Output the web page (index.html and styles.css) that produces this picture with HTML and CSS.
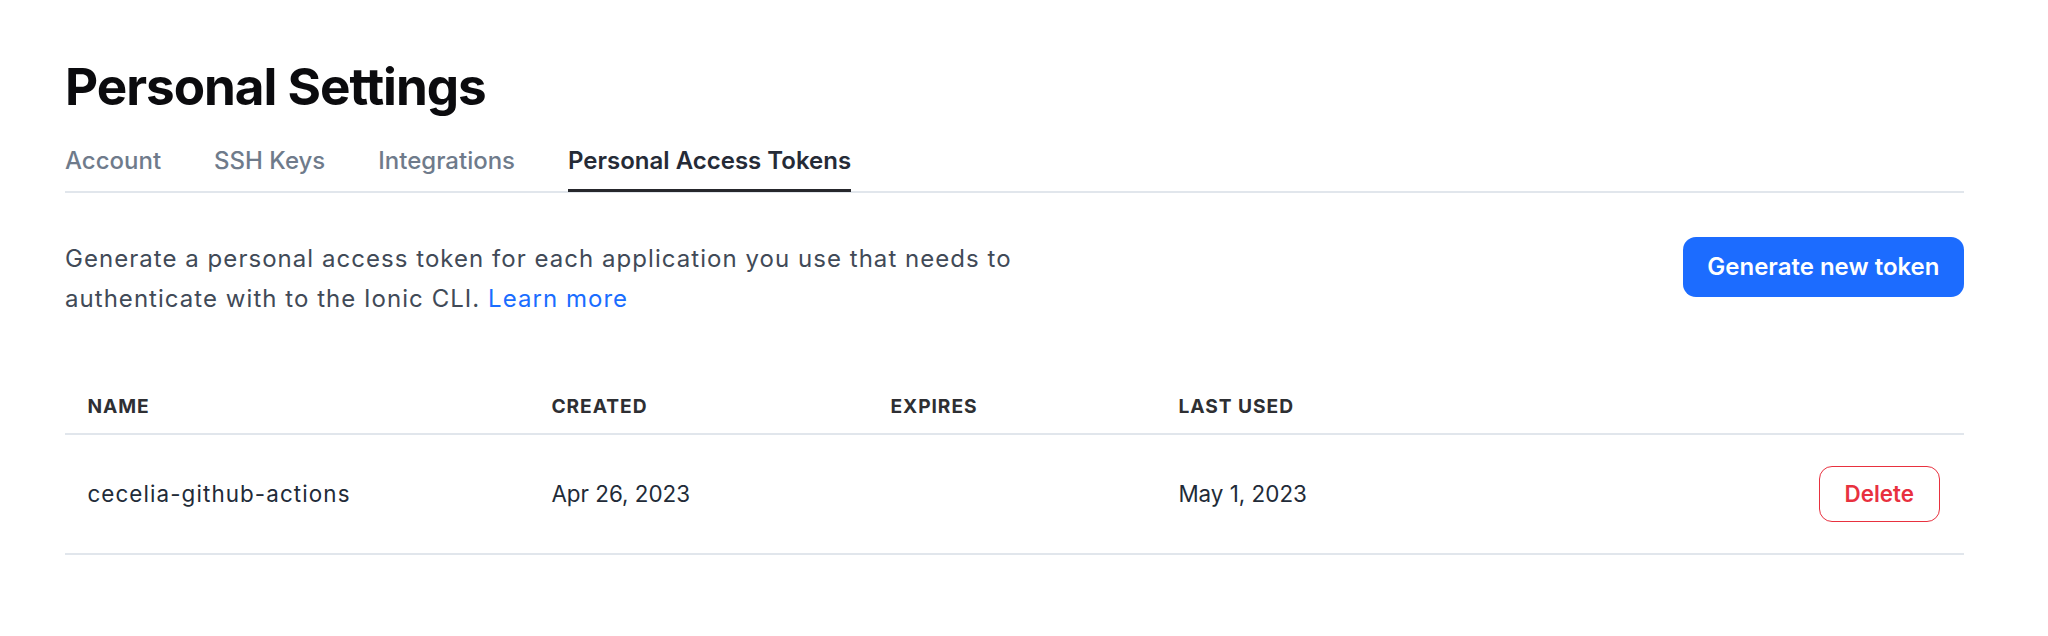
FILE: index.html
```html
<!DOCTYPE html>
<html lang="en">
<head>
<meta charset="utf-8">
<title>Personal Settings</title>
<link rel="stylesheet" href="styles.css">
</head>
<body>
<main class="page">
  <h1 class="title">Personal Settings</h1>
  <nav class="tabs">
    <a class="tab">Account</a>
    <a class="tab">SSH Keys</a>
    <a class="tab">Integrations</a>
    <a class="tab tab-active">Personal Access Tokens</a>
  </nav>
  <section class="intro">
    <p class="intro-text">Generate a personal access token for each application you use that needs to authenticate with to the Ionic CLI. <a class="link">Learn more</a></p>
    <button class="btn-primary">Generate new token</button>
  </section>
  <div class="table">
    <div class="row row-head">
      <div class="cell">Name</div>
      <div class="cell">Created</div>
      <div class="cell">Expires</div>
      <div class="cell">Last used</div>
      <div class="cell"></div>
    </div>
    <div class="row row-body">
      <div class="cell cell-name">cecelia-github-actions</div>
      <div class="cell">Apr 26, 2023</div>
      <div class="cell"></div>
      <div class="cell">May 1, 2023</div>
      <div class="cell cell-actions"><button class="btn-danger">Delete</button></div>
    </div>
  </div>
</main>
</body>
</html>
```
FILE: styles.css
```css
* { box-sizing: border-box; }
html, body { margin: 0; padding: 0; background: #fff; }
body {
  font-family: Inter, "Noto Sans", "Liberation Sans", sans-serif;
  color: #222b38;
}
.page {
  padding: 55px 84px 0 65px;
}
.title {
  margin: 0 0 28px 0;
  font-size: 51.2px;
  line-height: 62px;
  font-weight: 700;
  letter-spacing: -0.02em;
  color: #0b0b0e;
}
.tabs {
  display: flex;
  gap: 53px;
  border-bottom: 2px solid #e1e6ec;
}
.tab {
  font-size: 24px;
  line-height: 32px;
  font-weight: 500;
  color: #6f7b8b;
  padding-bottom: 12px;
  border-bottom: 3px solid transparent;
  margin-bottom: -1px;
  cursor: pointer;
}
.tab-active {
  color: #252b37;
  font-weight: 600;
  border-bottom-color: #26272c;
}
.intro {
  display: flex;
  justify-content: space-between;
  align-items: flex-start;
  margin-top: 44px;
}
.intro-text {
  margin: 2px 0 0 0;
  max-width: 1060px;
  font-size: 24px;
  line-height: 40px;
  letter-spacing: 1.04px;
  color: #414a57;
}
.link {
  color: #1a6dff;
  cursor: pointer;
}
.btn-primary {
  font-family: inherit;
  font-size: 24px;
  line-height: 32px;
  font-weight: 600;
  color: #fff;
  background: #1c6cff;
  border: none;
  border-radius: 13px;
  padding: 14px 24.5px;
  cursor: pointer;
}
.table {
  margin-top: 60px;
}
.row {
  display: grid;
  grid-template-columns: 464px 339px 288px 1fr auto;
  align-items: center;
  border-bottom: 2px solid #e1e6ec;
}
.cell {
  padding-left: 22.4px;
}
.row-head .cell {
  font-size: 19.2px;
  line-height: 24px;
  font-weight: 700;
  text-transform: uppercase;
  letter-spacing: 0.05em;
  color: #2e2f33;
  padding-top: 15px;
  padding-bottom: 15px;
}
.row-body {
  padding: 30.8px 0;
}
.row-body .cell {
  font-size: 22.4px;
  line-height: 32px;
  color: #222b38;
}
.row-body .cell-name {
  letter-spacing: 1.1px;
}
.cell-actions {
  padding-right: 24px;
  display: flex;
  justify-content: flex-end;
}
.btn-danger {
  font-family: inherit;
  font-size: 22.4px;
  line-height: 28.8px;
  font-weight: 600;
  color: #e8313f;
  background: #fff;
  border: 1.6px solid #e8313f;
  border-radius: 13px;
  padding: 12.8px 25px;
  cursor: pointer;
}
```
